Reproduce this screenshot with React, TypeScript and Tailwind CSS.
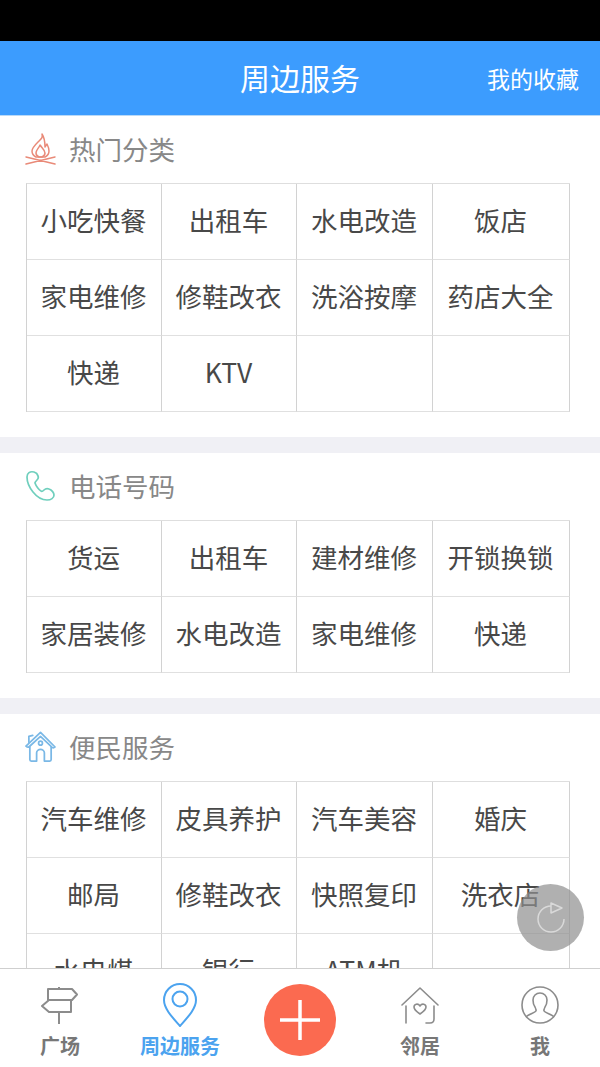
import React from "react";

const font = { fontFamily: '"Noto Sans CJK SC", "Noto Sans", sans-serif' };

function Grid({ items }: { items: string[] }) {
  return (
    <div className="ml-[26px] w-[544px] grid grid-cols-[135px_135px_136px_137px] auto-rows-[76px] border-l border-t border-l-[#d2d2d2] border-t-[#dedede]">
      {items.map((t, i) => (
        <div key={i} className="flex items-center justify-center border-r border-b border-r-[#d2d2d2] border-b-[#e0e0e0] text-[26.5px] text-[#484848] leading-none whitespace-nowrap pb-[3px] pr-[1px]">
          {t}
        </div>
      ))}
    </div>
  );
}

function Title({ icon, text }: { icon: React.ReactNode; text: string }) {
  return (
    <div className="h-[67px] flex items-center pl-[25px] pb-[1px]">
      <div className="w-[31px] h-[36px] flex items-center justify-center">{icon}</div>
      <span className="ml-[13px] text-[26.5px] leading-none text-[#888888]">{text}</span>
    </div>
  );
}

const Fire = (
  <svg width="31" height="32" viewBox="0 0 31 32" fill="none" stroke="#e98a78" strokeWidth="1.500" strokeLinecap="round" strokeLinejoin="round">
    <path d="M17 1c1 4-1 5-4 8-3 3-6 6-6 9 0 3 2 5 4 6h9c2-1 4-3 4-6 0-3-1-5-2-7-1 1-1 2-2 3 0-5-1-10-3-13z" />
    <path d="M15 12c-1 3-4 5-4 8 0 2 1 3 3 4h3c2-1 3-2 3-4 0-3-3-5-5-8z" />
    <path d="M1 24l29 7M30 24L1 31" />
  </svg>
);
const Phone = (
  <svg width="29" height="32" viewBox="0 0 29 32" fill="none" stroke="#6fcfbd" strokeWidth="1.700" strokeLinecap="round" strokeLinejoin="round">
    <path d="M8 2C4 1 1 3 1 7c0 5 2 10 6 15 4 5 9 8 14 8 4 0 7-2 7-5 0-2-2-5-5-6-2-1-4 0-5 1-1 1-2 2-3 1-2-1-5-5-6-8 0-1 1-2 2-3s2-2 1-4c-.5-2-2-3.500-4-4z" />
  </svg>
);
const House = (
  <svg width="32" height="32" viewBox="0 0 32 32" fill="none" stroke="#7ab8e6" strokeWidth="1.800" strokeLinecap="round" strokeLinejoin="round">
    <path d="M1 15L16 1l15 15c-1 1-2 1-3 .5L16 5 4 16c-1 .5-2 0-3-1z" />
    <path d="M5 16v13c0 1 .5 1.500 1.500 1.500H12V22c0-2 2-3.500 4-3.500s4 1.500 4 3.500v8.500h5.500c1 0 1.500-.5 1.500-1.500V16" />
    <circle cx="16" cy="12" r="2" />
    <path d="M4 11V5l4-1" />
  </svg>
);

function Section({ icon, title, items, last }: { icon: React.ReactNode; title: string; items: string[]; last?: boolean }) {
  return (
    <section className={last ? "bg-white" : "bg-white pb-[25px]"}>
      <Title icon={icon} text={title} />
      <Grid items={items} />
    </section>
  );
}

function NavItem({ icon, label, active }: { icon: React.ReactNode; label: string; active?: boolean }) {
  return (
    <div className="w-[120px] flex flex-col items-center">
      <div className="h-[44px] flex items-center justify-center">{icon}</div>
      <span className={`mt-[7px] text-[20px] leading-[24px] font-bold ${active ? "text-[#4ba3ef]" : "text-[#777777]"}`}>{label}</span>
    </div>
  );
}

export default function App() {
  return (
    <div className="relative w-[600px] h-[1067px] overflow-hidden flex flex-col bg-white" style={font}>
      <div className="h-[41px] shrink-0 bg-black" />
      <header className="h-[75px] shrink-0 bg-[#3c9cfe] border-b border-[#b9d9f7] relative flex items-center justify-center">
        <span className="text-[30px] leading-none text-white pb-[2px]">周边服务</span>
        <span className="absolute right-[21px] top-[26px] text-[23px] leading-none text-white">我的收藏</span>
      </header>
      <main className="flex-1 min-h-0 overflow-hidden bg-[#f0f0f5]">
        <div className="flex flex-col gap-[16px]">
          <Section icon={Fire} title="热门分类" items={["小吃快餐", "出租车", "水电改造", "饭店", "家电维修", "修鞋改衣", "洗浴按摩", "药店大全", "快递", "KTV", "", ""]} />
          <Section icon={Phone} title="电话号码" items={["货运", "出租车", "建材维修", "开锁换锁", "家居装修", "水电改造", "家电维修", "快递"]} />
          <Section icon={House} title="便民服务" last items={["汽车维修", "皮具养护", "汽车美容", "婚庆", "邮局", "修鞋改衣", "快照复印", "洗衣店", "水电煤", "银行", "ATM机", ""]} />
        </div>
      </main>
      <nav className="h-[99px] shrink-0 bg-white border-t border-[#cfcfcf] flex pt-[14px]">
        <NavItem
          label="广场"
          icon={
            <svg width="38" height="37" viewBox="0 0 38 37" fill="none" stroke="#8c8c8c" strokeWidth="2" strokeLinejoin="round">
              <path d="M18 0v2M18 25v12" />
              <path d="M7 2h24l5 5.500L31 13H7z" />
              <path d="M30 13v12H8l-7-6 7-6" />
            </svg>
          }
        />
        <NavItem
          active
          label="周边服务"
          icon={
            <svg width="34" height="44" viewBox="0 0 34 44" fill="none" stroke="#4ba3ef" strokeWidth="2">
              <path d="M17 43C10 35 1 26 1 17a16 16 0 0 1 32 0c0 9-9 18-16 26z" />
              <circle cx="17" cy="16" r="7.500" />
            </svg>
          }
        />
        <div className="w-[120px] flex justify-center pt-[1px]">
          <div className="w-[72px] h-[72px] rounded-full bg-[#fb6a50] flex items-center justify-center">
            <svg width="42" height="42" viewBox="0 0 42 42" stroke="#ffffff" strokeWidth="3.500">
              <path d="M21 1v40M1 21h40" />
            </svg>
          </div>
        </div>
        <NavItem
          label="邻居"
          icon={
            <svg width="38" height="37" viewBox="0 0 38 37" fill="none" stroke="#8c8c8c" strokeWidth="1.600" strokeLinejoin="round" strokeLinecap="round">
              <path d="M1 18L19 1l18 17" />
              <path d="M5 19v17M33 19v13c0 3-1 4-4 4h-4" />
              <path d="M19 27c-3-2-6-4-6-7 0-3 4-4 6-1 2-3 6-2 6 1 0 3-3 5-6 7z" />
            </svg>
          }
        />
        <NavItem
          label="我"
          icon={
            <svg width="38" height="38" viewBox="0 0 38 38" fill="none" stroke="#8c8c8c" strokeWidth="1.600" strokeLinejoin="round">
              <circle cx="19" cy="19" r="18" />
              <path d="M5 31c2-3 9-4 10-6 .5-1 0-2-1-4-1.500-2-2-4-2-7 0-4 3-7 7-7s7 3 7 7c0 3-.5 5-2 7-1 2-1.500 3-1 4 1 2 8 3 10 6" />
            </svg>
          }
        />
      </nav>
      <div className="absolute left-[517px] top-[884px] w-[67px] h-[67px] rounded-full bg-[#8f8f8f]/70 flex items-center justify-center">
        <svg width="28" height="31" viewBox="-1 -1 28 31" fill="none" stroke="#d9d9d9" strokeWidth="1.500" strokeLinejoin="round">
          <path d="M13 3A13 13 0 1 0 26 16" />
          <path d="M13 0l11 5-11 5z" />
        </svg>
      </div>
    </div>
  );
}
